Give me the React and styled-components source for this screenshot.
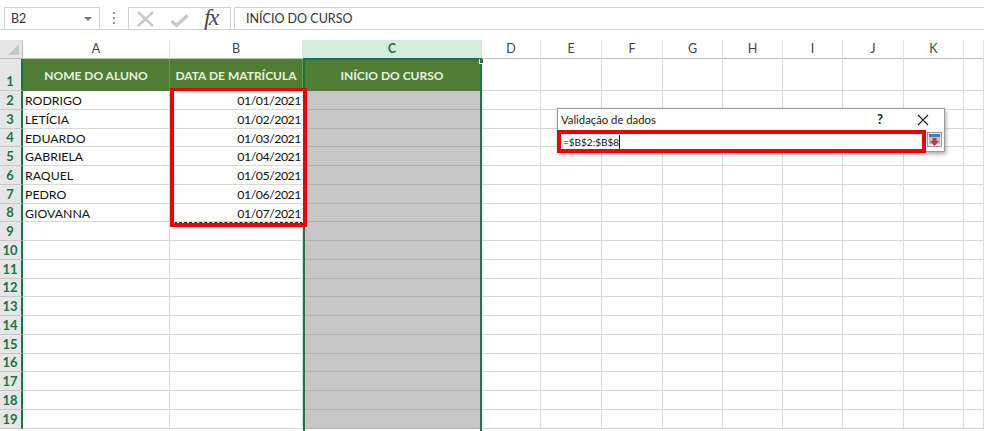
import React from 'react';
import styled, { createGlobalStyle } from 'styled-components';

const GlobalStyle = createGlobalStyle`
  html, body { margin: 0; padding: 0; background: #fff; overflow: hidden; }
  body { font-family: Lato, "Open Sans", sans-serif; }
`;

const COLUMNS = '23px 147px 133px 179px 59px 61px 61px 60px 60px 60px 61px 60px 20px';
const LETTERS = ['A', 'B', 'C', 'D', 'E', 'F', 'G', 'H', 'I', 'J', 'K', ''];
const STUDENTS = [
  ['RODRIGO', '01/01/2021'],
  ['LETÍCIA', '01/02/2021'],
  ['EDUARDO', '01/03/2021'],
  ['GABRIELA', '01/04/2021'],
  ['RAQUEL', '01/05/2021'],
  ['PEDRO', '01/06/2021'],
  ['GIOVANNA', '01/07/2021'],
];
const ROW_COUNT = 18;

const Page = styled.div`
  width: 984px;
  height: 431px;
  display: flex;
  flex-direction: column;
  overflow: hidden;
  color: #111;
`;

const FormulaBar = styled.div`
  height: 30px;
  padding: 7px 0 0 4px;
  box-sizing: border-box;
  display: flex;
  align-items: flex-start;
  border-bottom: 1px solid #d4d4d4;
  flex: none;
  margin-bottom: 10px;
`;

const BarBox = styled.div`
  height: 23px;
  box-sizing: border-box;
  border: 1px solid #d2d2d2;
  display: flex;
  align-items: center;
  font-size: 12.5px;
  color: #333;
`;

const NameBox = styled(BarBox)`
  width: 96px;
  padding: 0 7px 0 6px;
  justify-content: space-between;
`;

const Caret = styled.span`
  width: 0;
  height: 0;
  border-left: 4px solid transparent;
  border-right: 4px solid transparent;
  border-top: 4px solid #777;
`;

const Grip = styled.div`
  width: 2px;
  height: 12px;
  margin: 5px 13px 0 13px;
  background: repeating-linear-gradient(#999 0 2px, transparent 2px 5px);
`;

const ButtonsBox = styled(BarBox)`
  width: 103px;
  padding: 0 8px 0 8px;
  justify-content: space-between;
  margin-right: 3px;
`;

const ConfirmIcon = styled.svg`
  margin-top: 4px;
`;

const FxLabel = styled.span`
  font-family: "Liberation Serif", serif;
  font-style: italic;
  font-size: 24px;
  color: #4a4a4a;
  letter-spacing: -2px;
  margin-top: -3px;
  width: 18px;
`;

const FormulaInput = styled(BarBox)`
  flex: 1;
  padding-left: 11px;
  border-right: none;
`;

const Sheet = styled.div`
  position: relative;
  flex: 1;
`;

const Row = styled.div`
  display: grid;
  grid-template-columns: ${COLUMNS};
  height: ${(p) => p.$height}px;
`;

const ColHeader = styled.div`
  display: flex;
  align-items: center;
  justify-content: center;
  font-size: 12.5px;
  box-sizing: border-box;
  padding-bottom: 1px;
  border-right: 1px solid ${(p) => (p.$active ? '#c6e3d3' : '#e2e2e2')};
  border-bottom: 1px solid ${(p) => (p.$active ? '#217346' : '#bdbdbd')};
  background: ${(p) => (p.$active ? '#d2ecdd' : '#fff')};
  color: ${(p) => (p.$active ? '#217346' : '#444')};
  font-weight: ${(p) => (p.$active ? 'bold' : 'normal')};
`;

const Corner = styled.div`
  background: #e6e6e6;
  border-right: 1px solid #bdbdbd;
  border-bottom: 1px solid #bdbdbd;
  box-sizing: border-box;
  position: relative;
  &::after {
    content: '';
    position: absolute;
    right: 3px;
    bottom: 3px;
    border-style: solid;
    border-width: 0 0 11px 11px;
    border-color: transparent transparent #c9c9c9 transparent;
  }
`;

const RowHeader = styled.div`
  background: #e6e6e6;
  box-sizing: border-box;
  border-right: 2px solid #217346;
  border-bottom: 1px solid #c9c9c9;
  color: #217346;
  font-weight: bold;
  font-size: 13px;
  display: flex;
  align-items: flex-end;
  justify-content: center;
  padding: 0 1px 0 0;
  line-height: 17px;
`;

const Cell = styled.div`
  box-sizing: border-box;
  border-right: 1px solid #dcdcdc;
  border-bottom: 1px solid #d8d8d8;
  font-size: 12.3px;
  padding: ${(p) => (p.$right ? '1.5px 1px 0 2px' : '1.5px 2px 0')};
  display: flex;
  align-items: center;
  white-space: nowrap;
  justify-content: ${(p) => (p.$right ? 'flex-end' : 'flex-start')};
  letter-spacing: ${(p) => (p.$right ? '-0.45px' : '0')};
`;

const TitleCell = styled(Cell)`
  background: #4f7e33;
  color: #e8f0e2;
  font-weight: bold;
  justify-content: center;
  border: none;
  border-right: 1px solid #6c9455;
  padding: 0;
  font-size: 12px;
`;

const SelectedCell = styled(Cell)`
  background: #c6c6c6;
  border-right: none;
  border-bottom: 1px solid #b2b2b2;
`;

const Selection = styled.div`
  position: absolute;
  left: 303px;
  top: 18px;
  width: 179px;
  bottom: 0;
  box-sizing: border-box;
  border: 2px solid #217346;
  border-bottom: none;
  pointer-events: none;
  &::after {
    content: '';
    position: absolute;
    right: -4px;
    top: -1px;
    width: 5px;
    height: 5px;
    background: #217346;
    border: 1px solid #fff;
    border-top: none;
    box-sizing: border-box;
  }
`;

const RangeHighlight = styled.div`
  position: absolute;
  left: 170px;
  top: 48px;
  width: 137px;
  height: 139px;
  box-sizing: border-box;
  border: 4px solid #ee0000;
  border-top-width: 3px;
  &::after {
    content: '';
    position: absolute;
    inset: 0;
    border: 1px dashed #222;
    border-top-color: #fff;
    border-right-color: #fff;
    border-left-color: #fff;
  }
`;

const Dialog = styled.div`
  position: absolute;
  left: 557px;
  top: 68px;
  width: 388px;
  height: 44px;
  box-sizing: border-box;
  background: #fff;
  border: 1px solid #9a9a9a;
  box-shadow: 1px 2px 4px rgba(0, 0, 0, 0.35);
`;

const DialogTitle = styled.div`
  height: 20px;
  display: flex;
  align-items: center;
  padding-left: 3px;
  font-size: 11.3px;
  color: #222;
`;

const HelpMark = styled.span`
  position: absolute;
  left: 319px;
  top: 2px;
  font-size: 13px;
  font-weight: bold;
  color: #222;
`;

const CloseMark = styled.svg`
  position: absolute;
  left: 359px;
  top: 5px;
`;

const RangeInput = styled.div`
  position: absolute;
  left: -1px;
  top: 21px;
  width: 369px;
  height: 23px;
  box-sizing: border-box;
  border: 4px solid #ee0000;
  background: #fff;
  display: flex;
  align-items: center;
  padding-left: 2px;
  font-size: 10px;
  color: #111;
`;

const TextCursor = styled.span`
  width: 1px;
  height: 14px;
  background: #111;
`;

const PickerButton = styled.svg`
  position: absolute;
  left: 369px;
  top: 23px;
`;

const App = () => (
  <Page>
    <GlobalStyle />
    <FormulaBar>
      <NameBox>
        B2
        <Caret />
      </NameBox>
      <Grip />
      <ButtonsBox>
        <svg width="17" height="16" viewBox="0 0 17 16">
          <path d="M1 1l15 14M16 1L1 15" stroke="#c9c9c9" strokeWidth="2.4" fill="none" />
        </svg>
        <ConfirmIcon width="19" height="13" viewBox="0 0 19 13">
          <path d="M1.5 7l5 4.5L17.5 1.5" stroke="#c9c9c9" strokeWidth="3.4" fill="none" />
        </ConfirmIcon>
        <FxLabel>fx</FxLabel>
      </ButtonsBox>
      <FormulaInput>INÍCIO DO CURSO</FormulaInput>
    </FormulaBar>
    <Sheet>
      <Row $height={19}>
        <Corner />
        {LETTERS.map((letter, i) => (
          <ColHeader key={i} $active={letter === 'C'}>{letter}</ColHeader>
        ))}
      </Row>
      <Row $height={32}>
        <RowHeader>1</RowHeader>
        <TitleCell>NOME DO ALUNO</TitleCell>
        <TitleCell>DATA DE MATRÍCULA</TitleCell>
        <TitleCell>INÍCIO DO CURSO</TitleCell>
        {LETTERS.slice(3).map((_, i) => <Cell key={i} />)}
      </Row>
      {Array.from({ length: ROW_COUNT }, (_, r) => (
        <Row key={r} $height={18.78}>
          <RowHeader>{r + 2}</RowHeader>
          <Cell>{STUDENTS[r]?.[0]}</Cell>
          <Cell $right>{STUDENTS[r]?.[1]}</Cell>
          <SelectedCell />
          {LETTERS.slice(3).map((_, i) => <Cell key={i} />)}
        </Row>
      ))}
      <Selection />
      <RangeHighlight />
      <Dialog>
        <DialogTitle>Validação de dados</DialogTitle>
        <HelpMark>?</HelpMark>
        <CloseMark width="12" height="12" viewBox="0 0 12 12">
          <path d="M1 1l10 10M11 1L1 11" stroke="#222" strokeWidth="1.1" fill="none" />
        </CloseMark>
        <RangeInput>
          =$B$2:$B$8
          <TextCursor />
        </RangeInput>
        <PickerButton width="15" height="15" viewBox="0 0 15 15">
          <rect x="0.5" y="0.5" width="14" height="14" fill="#e8e8e8" stroke="#9a9a9a" />
          <rect x="2" y="2" width="11" height="3" fill="#3f7fc0" />
          <rect x="2" y="5" width="11" height="7" fill="#a9c6e3" />
          <path d="M5.5 6h4v3h2.5L7.5 14 3 9h2.5z" fill="#d8302c" />
        </PickerButton>
      </Dialog>
    </Sheet>
  </Page>
);

export default App;
